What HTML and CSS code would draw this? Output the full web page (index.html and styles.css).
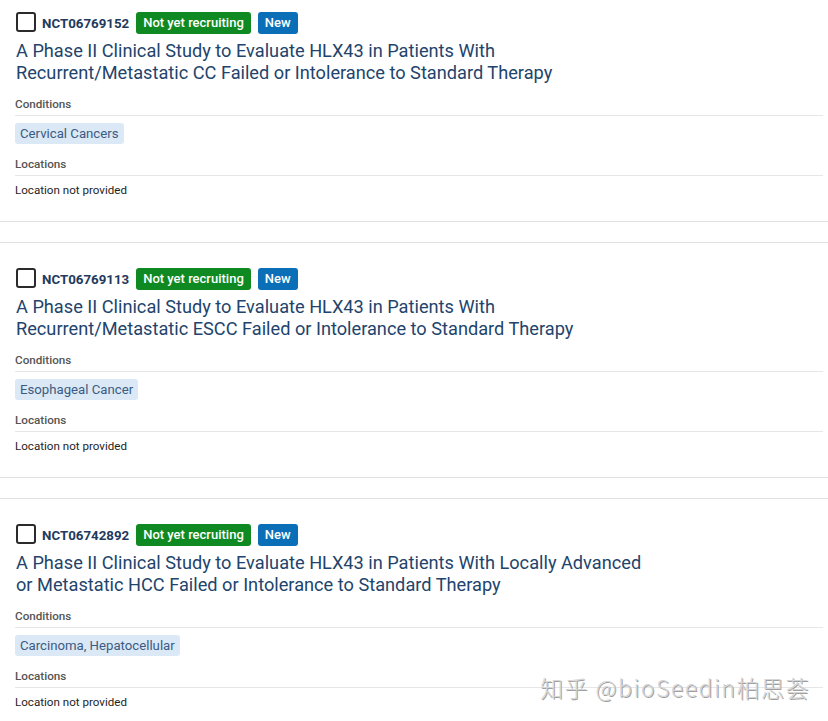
FILE: index.html
```html
<!DOCTYPE html>
<html lang="en">
<head>
<meta charset="utf-8">
<title>Studies</title>
<link rel="stylesheet" href="styles.css">
</head>
<body>
<main class="results">
  <article class="card">
    <div class="head">
      <span class="check"></span>
      <span class="nct">NCT06769152</span>
      <span class="badge badge-green">Not yet recruiting</span>
      <span class="badge badge-blue">New</span>
    </div>
    <h2 class="title">A Phase II Clinical Study to Evaluate HLX43 in Patients With Recurrent/Metastatic CC Failed or Intolerance to Standard Therapy</h2>
    <div class="label">Conditions</div>
    <div class="chips"><span class="chip">Cervical Cancers</span></div>
    <div class="label label-loc">Locations</div>
    <div class="loc">Location not provided</div>
  </article>
  <article class="card">
    <div class="head">
      <span class="check"></span>
      <span class="nct">NCT06769113</span>
      <span class="badge badge-green">Not yet recruiting</span>
      <span class="badge badge-blue">New</span>
    </div>
    <h2 class="title">A Phase II Clinical Study to Evaluate HLX43 in Patients With Recurrent/Metastatic ESCC Failed or Intolerance to Standard Therapy</h2>
    <div class="label">Conditions</div>
    <div class="chips"><span class="chip">Esophageal Cancer</span></div>
    <div class="label label-loc">Locations</div>
    <div class="loc">Location not provided</div>
  </article>
  <article class="card">
    <div class="head">
      <span class="check"></span>
      <span class="nct">NCT06742892</span>
      <span class="badge badge-green">Not yet recruiting</span>
      <span class="badge badge-blue">New</span>
    </div>
    <h2 class="title">A Phase II Clinical Study to Evaluate HLX43 in Patients With Locally Advanced or Metastatic HCC Failed or Intolerance to Standard Therapy</h2>
    <div class="label">Conditions</div>
    <div class="chips"><span class="chip">Carcinoma, Hepatocellular</span></div>
    <div class="label label-loc">Locations</div>
    <div class="loc">Location not provided</div>
  </article>
</main>
<div class="watermark">知乎 @bioSeedin柏思荟</div>
</body>
</html>
```
FILE: styles.css
```css
html, body {
  margin: 0;
  padding: 0;
  background: #fff;
}
body {
  font-family: Roboto, "Liberation Sans", Arial, sans-serif;
  color: #222;
  width: 828px;
  height: 721px;
  overflow: hidden;
  position: relative;
}
.results {
  margin-top: -14px;
  display: flex;
  flex-direction: column;
  gap: 20px;
}
.card {
  border-top: 1px solid #e2e2e2;
  border-bottom: 1px solid #e2e2e2;
  padding: 25px 5px 23px 15px;
}
.head {
  display: flex;
  align-items: center;
  height: 22px;
  padding-left: 1px;
}
.check {
  width: 16px;
  height: 16px;
  border: 2px solid #2b2b2b;
  border-radius: 3px;
  margin-right: 6px;
  margin-top: -2px;
}
.nct {
  font-size: 13.3px;
  font-weight: 700;
  color: #1f3a5e;
  margin-right: 7px;
}
.badge {
  height: 22px;
  line-height: 22px;
  padding: 0 7px;
  border-radius: 3px;
  color: #fff;
  font-size: 13px;
  font-weight: 500;
  margin-right: 7px;
}
.badge-green { background: #0f8a22; }
.badge-blue { background: #0b6fb8; }
.title {
  margin: 6px 0 0 1px;
  max-width: 636px;
  font-size: 18.2px;
  line-height: 22px;
  font-weight: 400;
  color: #22446c;
}
.label {
  margin-top: 12px;
  font-size: 11.7px;
  line-height: 16px;
  font-weight: 500;
  color: #555;
  padding-bottom: 3px;
  border-bottom: 1px solid #e6e6e6;
}
.chips {
  display: flex;
  margin-top: 7px;
}
.chip {
  background: #dbe8f6;
  color: #3a5b82;
  font-size: 13.2px;
  line-height: 15px;
  padding: 3px 5px;
  border-radius: 3px;
}
.label-loc { margin-top: 12px; }
.loc {
  margin-top: 6px;
  font-size: 11.6px;
  line-height: 16px;
  color: #1e1e1e;
}
.watermark {
  position: absolute;
  left: 540px;
  top: 672px;
  font-family: "Noto Sans CJK SC", "Noto Sans", sans-serif;
  font-size: 23px;
  line-height: 30px;
  font-weight: 300;
  color: #d6d6d6;
  text-shadow: 1px 1px 0 #a0a0a0;
  letter-spacing: 1.5px;
  white-space: nowrap;
}
```
